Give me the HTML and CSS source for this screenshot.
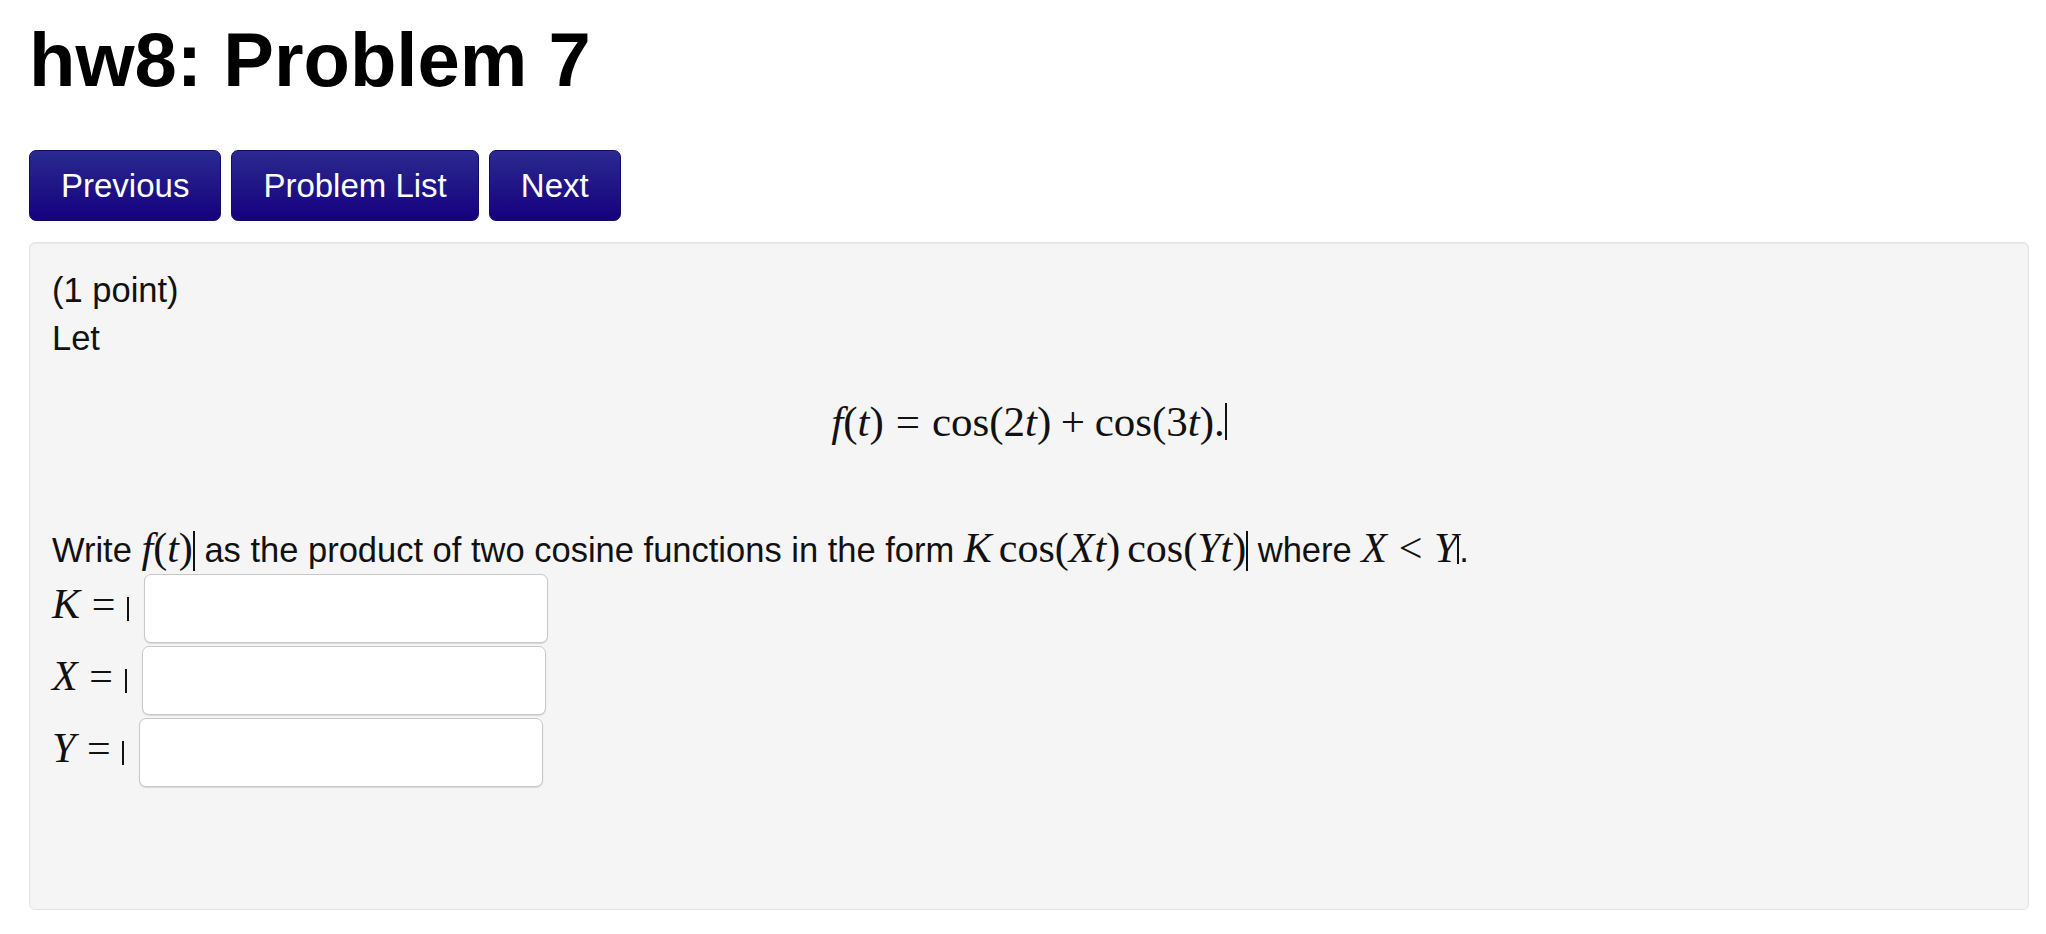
FILE: index.html
```html
<!DOCTYPE html>
<html lang="en">

<head>
    <meta charset="UTF-8">
    <title>hw8: Problem 7</title>
    <link rel="stylesheet" href="styles.css">
</head>

<body>
    <div class="page">
        <h1 class="title">hw8: Problem 7</h1>

        <div class="nav">
            <a class="btn" href="#">Previous</a>
            <a class="btn" href="#">Problem List</a>
            <a class="btn" href="#">Next</a>
        </div>

        <div class="problem">
            <p>(1 point)</p>
            <p>Let</p>

            <div class="display">
                <span class="m"><i>f</i>(<i>t</i>)<span class="rel">=</span>cos(2<i>t</i>)<span class="bin">+</span>cos(3<i>t</i>).</span><span class="bar bar-display"></span>
            </div>

            <p>Write <span class="m"><i>f</i>(<i>t</i>)</span><span class="bar"></span> as the product of two cosine functions in the form <span class="m"><i>K</i><span class="op">cos</span>(<i>X</i><i>t</i>)<span class="op">cos</span>(<i>Y</i><i>t</i>)</span><span class="bar"></span> where <span class="m"><i>X</i><span class="rel">&lt;</span><i>Y</i></span><span class="bar bar-short"></span>.</p>

            <div class="answer">
                <label class="m label"><i>K</i><span class="rel">=</span><span class="bar bar-label"></span></label>
                <input class="field" type="text">
            </div>
            <div class="answer">
                <label class="m label"><i>X</i><span class="rel">=</span><span class="bar bar-label"></span></label>
                <input class="field" type="text">
            </div>
            <div class="answer">
                <label class="m label"><i>Y</i><span class="rel">=</span><span class="bar bar-label"></span></label>
                <input class="field" type="text">
            </div>
        </div>
    </div>
</body>

</html>
```

FILE: styles.css
```css
* {
    margin: 0;
    padding: 0;
    box-sizing: border-box;
}

body {
    font-family: "Liberation Sans", Arial, sans-serif;
    color: #111;
    background-color: #fff;
}

.page {
    padding: 20px 17px 0 29px;
}

.title {
    font-size: 76px;
    line-height: 80px;
    font-weight: bold;
    color: #000;
}

/* nav buttons */
.nav {
    display: flex;
    gap: 10px;
    margin-top: 50px;
}

.btn {
    display: flex;
    align-items: center;
    height: 71px;
    padding: 0 31px;
    font-size: 33px;
    color: #fff;
    text-decoration: none;
    background: linear-gradient(#2a2a8e, #16007f);
    border: 1px solid #110c68;
    border-radius: 7px;
}

/* problem box */
.problem {
    margin-top: 21px;
    min-height: 668px;
    padding: 23px 22px;
    font-size: 34.5px;
    line-height: 48px;
    background-color: #f5f5f5;
    border: 1px solid #e3e3e3;
    border-radius: 6px;
    box-shadow: inset 0 1px 1px rgba(0, 0, 0, .05);
}

.display {
    margin: 30px 0 74px;
    text-align: center;
    font-family: "Liberation Serif", "Times New Roman", serif;
    font-size: 43px;
    line-height: 60px;
}

.display .m {
    font-size: 43px;
}

/* math */
.m {
    font-family: "Liberation Serif", "Times New Roman", serif;
    font-size: 42px;
    line-height: 1;
}

.m i {
    font-style: italic;
}

.rel {
    margin: 0 0.278em;
}

.bin {
    margin: 0 0.222em;
}

.op {
    margin-left: 0.167em;
}

.bar {
    display: inline-block;
    width: 2px;
    height: 40px;
    vertical-align: -9px;
    background-color: #111;
}

.bar-display {
    height: 37px;
    vertical-align: -4px;
}

.bar-short {
    height: 28px;
    vertical-align: -2px;
}

.bar-label {
    height: 24px;
    vertical-align: -3px;
}

/* answer rows */
.answer {
    display: flex;
    align-items: flex-start;
    margin-bottom: 3px;
}

.label {
    line-height: 61px;
}

.field {
    width: 404px;
    height: 69px;
    margin-left: 15px;
    background-color: #fff;
    border: 1px solid #c8c8c8;
    border-radius: 7px;
    box-shadow: 0 1px 1px rgba(0, 0, 0, .12);
}
```
